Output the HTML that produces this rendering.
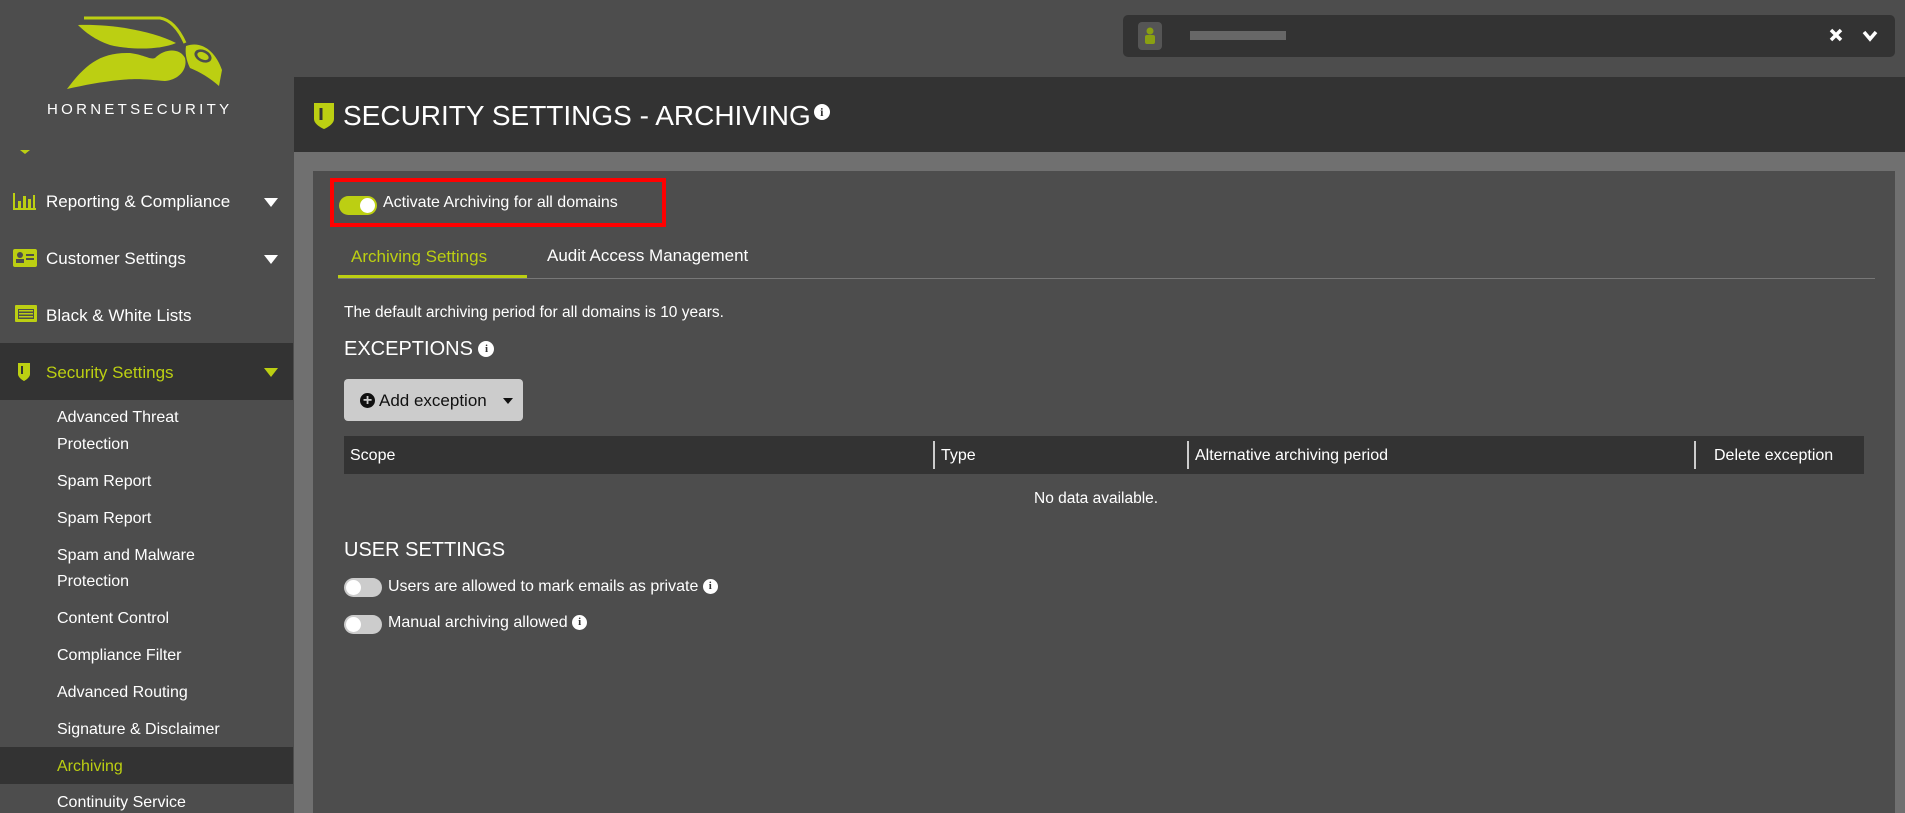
<!DOCTYPE html>
<html><head><meta charset="utf-8"><style>
*{margin:0;padding:0;box-sizing:border-box}
body{width:1905px;height:813px;overflow:hidden;background:#4d4d4d;font-family:"Liberation Sans",sans-serif;color:#fff;position:relative}
.a{position:absolute;white-space:nowrap}
.side{position:absolute;left:0;top:0;width:293px;height:813px;background:#4d4d4d}
.g{color:#bccf12}
.mi{font-size:17px;line-height:20px}
.si{font-size:16px;left:57px}
.tri{position:absolute;width:0;height:0;border-left:7px solid transparent;border-right:7px solid transparent;border-top:9px solid #fff}
.info{display:inline-block;width:15px;height:15px;border-radius:50%;background:#fff;color:#333;font-size:11px;font-weight:bold;text-align:center;line-height:15px;font-family:"Liberation Serif",serif;vertical-align:2px}
.tog{position:absolute;width:38px;height:19px;border-radius:10px;background:#ccc}
.tog::after{content:"";position:absolute;left:2px;top:2px;width:15px;height:15px;border-radius:50%;background:#fff}
.tog.on{background:#bccf12}
.tog.on::after{left:21px}
</style></head><body>
<div class="side">
<svg class="a" style="left:0;top:0" width="300" height="160" viewBox="0 0 300 160">
<path d="M84,18 L160,18 C172,20 180,32 185,43" stroke="#bccf12" stroke-width="3" fill="none"/>
<path d="M78,25 C110,24 150,30 176,43 C160,50 130,50 110,45 C95,40 85,32 78,25Z" fill="#bccf12"/>
<path d="M67,89 C85,65 100,52 130,53 C145,55 150,60 155,58 C165,48 180,48 185,58 C188,70 178,80 165,81 C150,80 140,78 120,80 C100,82 85,85 67,89Z" fill="#bccf12"/>
<path d="M186,46 C202,40 216,52 222,70 L219,86 C210,78 200,72 190,68 C186,60 185,52 186,46Z" fill="#bccf12"/>
<ellipse cx="203" cy="56" rx="9" ry="6" transform="rotate(25 203 56)" fill="#4d4d4d"/>
<ellipse cx="203" cy="56" rx="6" ry="3.5" transform="rotate(25 203 56)" fill="#bccf12"/>
<path d="M20,150 L30,150 L25,154Z" fill="#bccf12"/>
</svg>
<div class="a" style="left:47px;top:101px;font-size:15px;letter-spacing:3.3px">HORNETSECURITY</div>
<svg class="a" style="left:13px;top:192px" width="24" height="18"><path d="M1,1V17H23" stroke="#bccf12" stroke-width="2" fill="none"/><rect x="5" y="9" width="3" height="7" fill="#bccf12"/><rect x="10" y="4" width="3" height="12" fill="#bccf12"/><rect x="15" y="7" width="3" height="9" fill="#bccf12"/><rect x="20" y="3" width="2" height="13" fill="#bccf12"/></svg>
<div class="a mi" style="left:46px;top:192px">Reporting &amp; Compliance</div><div class="tri" style="left:264px;top:198px"></div>
<svg class="a" style="left:13px;top:249px" width="24" height="18"><rect width="24" height="18" rx="2" fill="#bccf12"/><circle cx="7" cy="6" r="3" fill="#4d4d4d"/><rect x="3" y="10" width="8" height="4" fill="#4d4d4d"/><rect x="13" y="5" width="8" height="2" fill="#4d4d4d"/><rect x="13" y="9" width="8" height="2" fill="#4d4d4d"/></svg>
<div class="a mi" style="left:46px;top:249px">Customer Settings</div><div class="tri" style="left:264px;top:255px"></div>
<svg class="a" style="left:15px;top:305px" width="22" height="17"><rect width="22" height="17" rx="1" fill="#bccf12"/><rect x="3" y="4" width="16" height="10" fill="#4d4d4d"/><rect x="4" y="5" width="14" height="1.5" fill="#bccf12"/><rect x="4" y="8" width="14" height="1.5" fill="#bccf12"/><rect x="4" y="11" width="14" height="1.5" fill="#bccf12"/></svg>
<div class="a mi" style="left:46px;top:306px">Black &amp; White Lists</div>
<div class="a" style="left:0;top:343px;width:293px;height:57px;background:#333"></div>
<svg class="a" style="left:17px;top:362px" width="14" height="20"><path d="M1,1H13V12C13,16 7,19 7,19C7,19 1,16 1,12Z" fill="#bccf12"/><path d="M5,4V12" stroke="#333" stroke-width="2"/></svg>
<div class="a mi g" style="left:46px;top:363px">Security Settings</div><div class="tri" style="left:264px;top:368px;border-top-color:#bccf12"></div>
<div class="a si" style="top:409px">Advanced Threat</div>
<div class="a si" style="top:436px">Protection</div>
<div class="a si" style="top:473px">Spam Report</div>
<div class="a si" style="top:510px">Spam Report</div>
<div class="a si" style="top:547px">Spam and Malware</div>
<div class="a si" style="top:573px">Protection</div>
<div class="a si" style="top:610px">Content Control</div>
<div class="a si" style="top:647px">Compliance Filter</div>
<div class="a si" style="top:684px">Advanced Routing</div>
<div class="a si" style="top:721px">Signature &amp; Disclaimer</div>
<div class="a" style="left:0;top:747px;width:293px;height:37px;background:#333"></div>
<div class="a si g" style="top:758px">Archiving</div>
<div class="a si" style="top:794px">Continuity Service</div>
</div>

<div class="a" style="left:1123px;top:15px;width:772px;height:42px;background:#333;border-radius:5px"></div>
<div class="a" style="left:1138px;top:22px;width:24px;height:28px;background:#555;border-radius:4px"></div>
<svg class="a" style="left:1143px;top:27px" width="14" height="18"><circle cx="7" cy="4" r="3.5" fill="#8aa012"/><rect x="2" y="8" width="10" height="9" rx="2" fill="#8aa012"/></svg>
<div class="a" style="left:1190px;top:31px;width:96px;height:9px;background:#8a8a8a;opacity:.6"></div>
<svg class="a" style="left:1829px;top:28px" width="14" height="14"><path d="M2,2L12,12M12,2L2,12" stroke="#fff" stroke-width="3.5"/></svg>
<svg class="a" style="left:1862px;top:30px" width="16" height="12"><path d="M2,2L8,9L14,2" stroke="#fff" stroke-width="3.5" fill="none"/></svg>

<div class="a" style="left:294px;top:77px;width:1611px;height:75px;background:#333"></div>
<svg class="a" style="left:313px;top:102px" width="22" height="28"><path d="M1,1H21V17C21,23 11,27 11,27C11,27 1,23 1,17Z" fill="#bccf12"/><path d="M8,6V18" stroke="#333" stroke-width="3"/></svg>
<div class="a" style="left:343px;top:100px;font-size:28px">SECURITY SETTINGS - ARCHIVING<span class="info" style="width:16px;height:16px;line-height:16px;font-size:12px;vertical-align:9px;margin-left:3px">i</span></div>
<div class="a" style="left:294px;top:152px;width:1611px;height:661px;background:#707070"></div>
<div class="a" style="left:313px;top:171px;width:1582px;height:642px;background:#4d4d4d"></div>

<div class="a" style="left:330px;top:178px;width:336px;height:49px;border:4px solid #f00"></div>
<div class="tog on" style="left:339px;top:196px"></div>
<div class="a" style="left:383px;top:194px;font-size:16px">Activate Archiving for all domains</div>

<div class="a" style="left:351px;top:247px;font-size:17px;color:#bccf12">Archiving Settings</div>
<div class="a" style="left:547px;top:246px;font-size:17px">Audit Access Management</div>
<div class="a" style="left:338px;top:278px;width:1537px;height:1px;background:#777"></div>
<div class="a" style="left:338px;top:275px;width:189px;height:3px;background:#bccf12"></div>

<div class="a" style="left:344px;top:304px;font-size:15.5px">The default archiving period for all domains is 10 years.</div>
<div class="a" style="left:344px;top:338px;font-size:20px">EXCEPTIONS <span class="info" style="width:16px;height:16px;line-height:16px;vertical-align:3px">i</span></div>

<div class="a" style="left:344px;top:379px;width:179px;height:42px;background:#ccc;border-radius:4px"></div>
<div class="a" style="left:360px;top:393px;width:15px;height:15px;border-radius:50%;background:#111;color:#ccc;font-size:16px;font-weight:bold;line-height:15px;text-align:center">+</div>
<div class="a" style="left:379px;top:391px;font-size:17px;color:#111">Add exception</div>
<div class="a" style="left:503px;top:398px;border-left:5px solid transparent;border-right:5px solid transparent;border-top:6px solid #111"></div>

<div class="a" style="left:344px;top:436px;width:1520px;height:38px;background:#333"></div>
<div class="a" style="left:350px;top:447px;font-size:16px">Scope</div>
<div class="a" style="left:933px;top:441px;width:2px;height:28px;background:#ccc"></div>
<div class="a" style="left:941px;top:447px;font-size:16px">Type</div>
<div class="a" style="left:1187px;top:441px;width:2px;height:28px;background:#ccc"></div>
<div class="a" style="left:1195px;top:447px;font-size:16px">Alternative archiving period</div>
<div class="a" style="left:1694px;top:441px;width:2px;height:28px;background:#ccc"></div>
<div class="a" style="left:1714px;top:447px;font-size:16px">Delete exception</div>
<div class="a" style="left:1034px;top:490px;font-size:15.5px">No data available.</div>

<div class="a" style="left:344px;top:539px;font-size:20px">USER SETTINGS</div>
<div class="tog" style="left:344px;top:578px"></div>
<div class="a" style="left:388px;top:578px;font-size:16px">Users are allowed to mark emails as private <span class="info">i</span></div>
<div class="tog" style="left:344px;top:615px"></div>
<div class="a" style="left:388px;top:614px;font-size:16px">Manual archiving allowed <span class="info">i</span></div>
</body></html>
